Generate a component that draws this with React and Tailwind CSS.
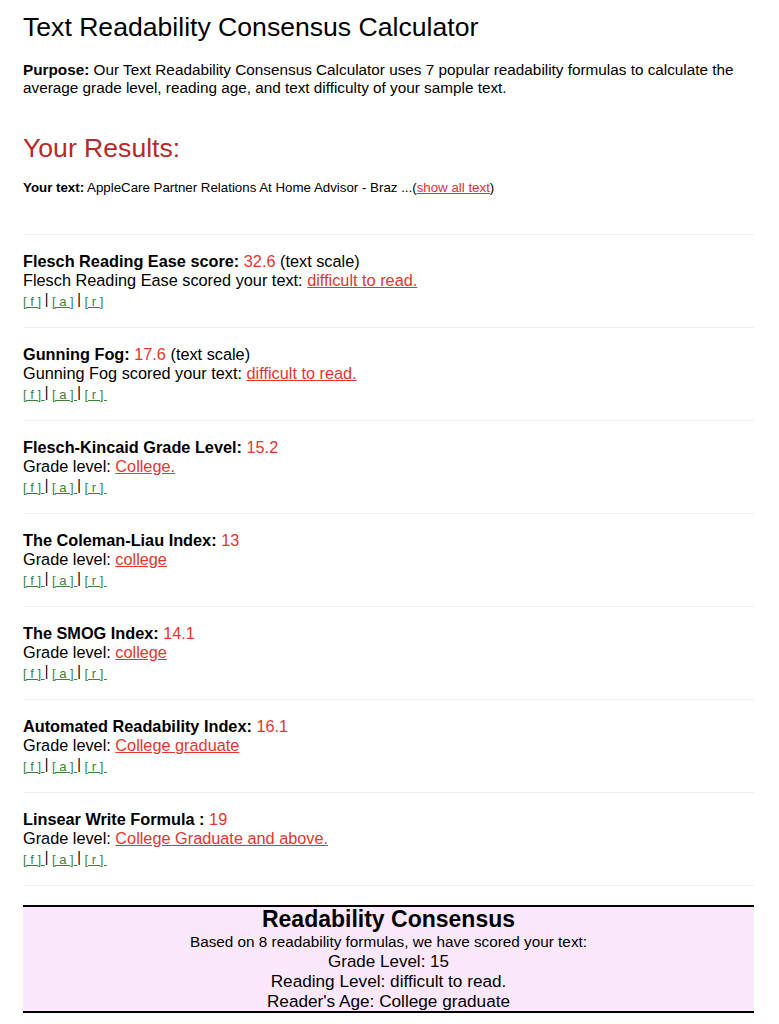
import React from "react";

const sections = [
  { title: "Flesch Reading Ease score:", value: "32.6", extra: " (text scale)", label: "Flesch Reading Ease scored your text: ", link: "difficult to read.", first: true },
  { title: "Gunning Fog:", value: "17.6", extra: " (text scale)", label: "Gunning Fog scored your text: ", link: "difficult to read." },
  { title: "Flesch-Kincaid Grade Level:", value: "15.2", extra: "", label: "Grade level: ", link: "College." },
  { title: "The Coleman-Liau Index:", value: "13", extra: "", label: "Grade level: ", link: "college" },
  { title: "The SMOG Index:", value: "14.1", extra: "", label: "Grade level: ", link: "college" },
  { title: "Automated Readability Index:", value: "16.1", extra: "", label: "Grade level: ", link: "College graduate" },
  { title: "Linsear Write Formula :", value: "19", extra: "", label: "Grade level: ", link: "College Graduate and above." },
];

function Links({ first }) {
  const cls = "text-[#3d7f3d] underline decoration-[#3d7f3d]";
  const sep = <span className="text-black text-[14px] align-[2px]">|</span>;
  if (first) {
    return (
      <div className="text-[13px] leading-[19px] h-[19px]">
        <a className={cls}>[ f ]</a> {sep} <a className={cls}>[ a ]</a> {sep} <a className={cls}>[ r ]</a>
      </div>
    );
  }
  return (
    <div className="text-[13px] leading-[19px] h-[19px]">
      <a className={cls}>[ f ]&nbsp;</a>{sep} <a className={cls}>[ a ]&nbsp;</a>{sep} <a className={cls}>[ r ]&nbsp;</a>
    </div>
  );
}

export default function App() {
  return (
    <div className="bg-white min-h-[1024px] px-[23px] pt-[12px] text-black" style={{ fontFamily: '"Liberation Sans", Arial, sans-serif' }}>
      <div className="w-[731px]">
        <h1 className="text-[26.6px] leading-[30px] font-normal">Text Readability Consensus Calculator</h1>
        <p className="mt-[19px] text-[15.3px] leading-[18px]">
          <b>Purpose:</b> Our Text Readability Consensus Calculator uses 7 popular readability formulas to calculate the average grade level, reading age, and text difficulty of your sample text.
        </p>
        <h2 className="mt-[36px] text-[26.6px] leading-[30px] text-[#b8282a] font-normal">Your Results:</h2>
        <p className="mt-[17px] text-[13.3px] leading-[16px]">
          <b>Your text:</b> AppleCare Partner Relations At Home Advisor - Braz ...(<a className="text-[#e0302e] underline">show all text</a>)
        </p>
        <div className="mt-[38px]">
          {sections.map((s, i) => (
            <div key={i} className="border-t border-[#eef1f4] pt-[17px] pb-[18px]">
              <div className="text-[16.3px] leading-[19px]">
                <b>{s.title}</b> <span className="text-[#e6352f]">{s.value}</span>{s.extra}
              </div>
              <div className="text-[16.3px] leading-[19px]">
                {s.label}<a className="text-[#e6352f] underline">{s.link}</a>
              </div>
              <Links first={s.first} />
            </div>
          ))}
          <div className="border-t border-[#eef1f4]" />
        </div>
        <div className="mt-[19px] border-t-2 border-b-2 border-black bg-[#fce8fc] text-center">
          <div className="text-[23px] leading-[25px] font-bold">Readability Consensus</div>
          <div className="text-[15.3px] leading-[20px]">Based on 8 readability formulas, we have scored your text:</div>
          <div className="text-[17px] leading-[19px]">Grade Level: 15</div>
          <div className="text-[17.2px] leading-[20px]">Reading Level: difficult to read.</div>
          <div className="text-[17.2px] leading-[20px]">Reader's Age: College graduate</div>
        </div>
      </div>
    </div>
  );
}
